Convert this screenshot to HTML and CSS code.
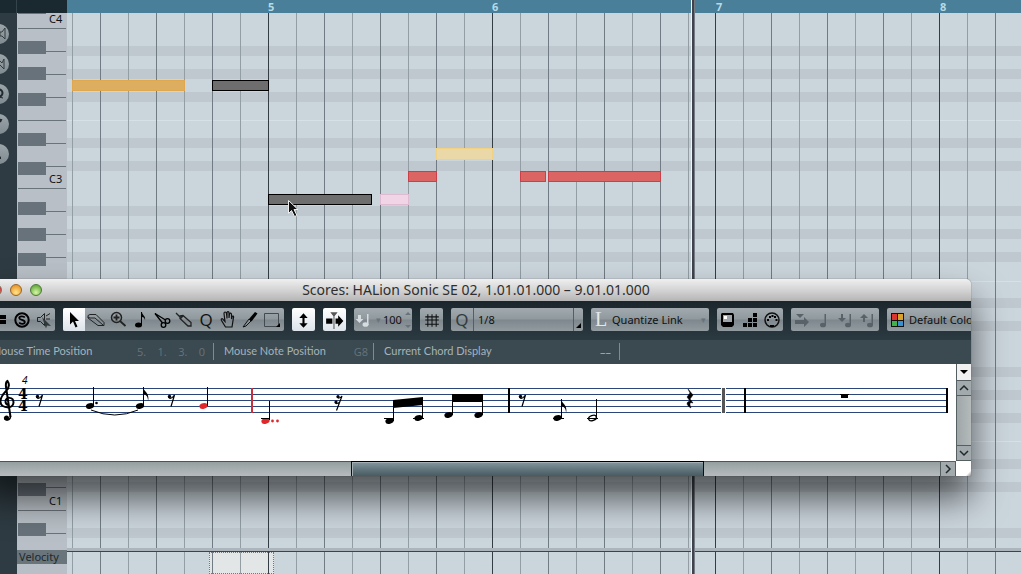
FILE: index.html
```html
<!DOCTYPE html>
<html lang="en">
<head>
<meta charset="utf-8">
<title>Scores: HALion Sonic SE 02</title>
<link rel="stylesheet" href="styles.css">
</head>
<body>
<main class="editor">
  <aside class="inspector">
    <div class="inspector-head"></div>
    <div class="inspector-tools">
      <button class="round" aria-label="Speaker"><svg viewBox="0 0 20 20"><path d="M11 8h2l3-4v11l-3-3h-2z" fill="none" stroke="#333c41"/></svg></button>
      <button class="round" aria-label="Monitor"><svg viewBox="0 0 20 20"><path d="M11 7l2 2 2-4v10l-4-4" fill="none" stroke="#333c41"/></svg></button>
      <button class="round" aria-label="Quantize"><svg viewBox="0 0 20 20"><circle cx="10" cy="9" r="3.5" fill="none" stroke="#222a2e" stroke-width="2"/><path d="M10 13l4 1" stroke="#222a2e"/></svg></button>
      <button class="round" aria-label="Length"><svg viewBox="0 0 20 20"><path d="M8 5l4 1-1 2" stroke="#222a2e" stroke-width="2" fill="none"/></svg></button>
      <button class="round" aria-label="Note expression"><svg viewBox="0 0 20 20"><path d="M9 11l3 2v2H9z" fill="#222a2e"/></svg></button>
    </div>
  </aside>

  <section class="keyboard">
    <div class="keyboard-head"></div>
    <svg class="keys" width="50" height="535" aria-label="Piano keys">
      <path class="key-lines" d="M1 15.5h48M29 38.5h20M29 61.5h20M29 84.5h20M1 107.5h48M29 130.5h20M29 153.5h20M1 175.5h48M29 198.5h20M29 221.5h20M29 244.5h20M29 474.5h20M1 497.5h48M29 520.5h20"/>
      <path class="key-black" d="M1 0h28v1H1zM1 28h28v13H1zM1 54h28v13H1zM1 80h28v13H1zM1 120h28v13H1zM1 149h28v13H1zM1 189h28v13H1zM1 215h28v13H1zM1 240h28v13H1zM1 470h28v13H1zM1 510h28v13H1z"/>
      <text x="32" y="10">C4</text>
      <text x="32" y="170">C3</text>
      <text x="32" y="492">C1</text>
    </svg>
    <div class="lane-name">Velocity</div>
  </section>

  <section class="arrange">
    <div class="ruler"><span class="bar first"></span><span class="bar">5</span><span class="bar">6</span><span class="bar">7</span><span class="bar">8</span></div>
    <div class="roll">
      <svg class="rows" width="100%" height="100%" aria-hidden="true">
        <g class="row-dark">
          <rect y="33" width="100%" height="10"/><rect y="56" width="100%" height="10"/><rect y="79" width="100%" height="10"/>
          <rect y="125" width="100%" height="10"/><rect y="148" width="100%" height="10"/>
          <rect y="193" width="100%" height="10"/><rect y="216" width="100%" height="10"/><rect y="239" width="100%" height="10"/>
          <rect y="285" width="100%" height="10"/><rect y="308" width="100%" height="10"/>
          <rect y="354" width="100%" height="10"/><rect y="377" width="100%" height="10"/><rect y="400" width="100%" height="10"/>
          <rect y="446" width="100%" height="10"/><rect y="469" width="100%" height="10"/><rect y="515" width="100%" height="10"/>
        </g>
        <g class="row-light"><rect y="107" width="100%" height="1"/><rect y="268" width="100%" height="1"/><rect y="428" width="100%" height="1"/></g>
      </svg>
      <div class="note n1"></div>
      <div class="note n2 selected"></div>
      <div class="note n3 selected"></div>
      <div class="note n4"></div>
      <div class="note n5 red"></div>
      <div class="note n6"></div>
      <div class="note n7 red"></div>
      <div class="note n8 red"></div>
    </div>
    <div class="divider"></div>
    <div class="lane"><div class="lane-selection"></div></div>
    <svg class="beats" aria-hidden="true">
      <path class="eighth" d="M5.500 0v900M61.500 0v900M117.500 0v900M173.500 0v900M229.500 0v900M285.500 0v900M341.500 0v900M397.500 0v900M453.500 0v900M509.500 0v900M565.500 0v900M621.500 0v900M676.500 0v900M732.500 0v900M788.500 0v900M844.500 0v900M900.500 0v900"/>
      <path class="quarter" d="M33.500 0v900M89.500 0v900M145.500 0v900M257.500 0v900M313.500 0v900M369.500 0v900M481.500 0v900M537.500 0v900M593.500 0v900M704.500 0v900M760.500 0v900M816.500 0v900M928.500 0v900"/>
      <path class="whole" d="M201.500 0v900M425.500 0v900M648.500 0v900M872.500 0v900"/>
    </svg>
    <div class="playhead"></div>
    <svg class="cursor" width="14" height="19" viewBox="0 0 14 19" aria-hidden="true"><path d="M1.500 1.500v13l3-3 3 6 2.500-1-3-6h4z" fill="#111" stroke="#eee"/></svg>
  </section>
</main>

<section class="window" aria-label="Score editor">
  <header class="titlebar">
    <button class="light close" aria-label="Close"></button>
    <button class="light minimise" aria-label="Minimise"></button>
    <button class="light expand" aria-label="Zoom"></button>
    <h1>Scores: HALion Sonic SE 02, 1.01.01.000 – 9.01.01.000</h1>
  </header>

  <div class="toolbar">
    <div class="group">
      <button class="tool" aria-label="Setup"><svg viewBox="0 0 22 23"><path d="M7 7h10v4H7zM7 12h10v4H7z"/></svg></button>
      <button class="tool" aria-label="Solo editor"><svg viewBox="0 0 22 23"><circle cx="11" cy="12" r="6.700" fill="none" stroke="#000" stroke-width="2"/><path d="M13.800 9.500c-1-1.700-5.600-1.700-5.600.500s5.600 1.500 5.600 4-4.600 2.300-5.600.500" fill="none" stroke="#000" stroke-width="1.800"/></svg></button>
      <button class="tool" aria-label="Acoustic feedback"><svg viewBox="0 0 22 23"><path d="M4.500 9.500h3l4-4v12l-4-4h-3zM13 8l4-2.500M13 11h4" fill="none" stroke="#222"/><path d="M9 9l9 9-4-.500-1 3z" fill="#30383c"/></svg></button>
    </div>
    <div class="group tools">
      <button class="tool on" aria-label="Object selection"><svg viewBox="0 0 22 23"><path d="M7 4v12.500l3-3 2.500 6 2-1-2.500-5.500h4z"/></svg></button>
      <button class="tool" aria-label="Erase"><svg viewBox="0 0 22 23"><path d="M3 7.500l2-1h6l8 8v3h-6l-10-7.500zM3 9l2 1h5l8 7" fill="none" stroke="#222"/></svg></button>
      <button class="tool" aria-label="Zoom"><svg viewBox="0 0 22 23"><circle cx="9.500" cy="9.500" r="5" fill="none" stroke="#222" stroke-width="1.500"/><path d="M6.500 9.500h6M9.500 6.500v6M13 13l5.500 5" fill="none" stroke="#222" stroke-width="1.800"/></svg></button>
      <button class="tool" aria-label="Insert note"><svg viewBox="0 0 22 23"><ellipse cx="9.500" cy="17" rx="3.500" ry="2.500"/><path d="M12 17V4h1c0 3 4 4 3 8-.500-2-1.500-3-3-3v8z"/></svg></button>
      <button class="tool" aria-label="Split"><svg viewBox="0 0 22 23"><g fill="none" stroke="#000" stroke-width="1.300"><circle cx="16.500" cy="13" r="2.300"/><circle cx="12.500" cy="17" r="2.300"/><path d="M4 5.500l10.500 6.500M4 5.500l7.500 9.500"/></g></svg></button>
      <button class="tool" aria-label="Glue"><svg viewBox="0 0 22 23"><path d="M3 5l4 4M7 8l3-.500 8 7v3.500h-3l-8-7.500zM7 11l3-3" fill="none" stroke="#222" stroke-width="1.300"/></svg></button>
      <button class="tool letter" aria-label="Quantize">Q</button>
      <button class="tool" aria-label="Layout"><svg viewBox="0 0 22 23"><path d="M8.500 19l-4-6.500c-1-2 1-2.500 2-.500l1.500 1.500-1-8c0-2 2-2 2.500 0l.500 5V5c0-2 2-1.500 2 0v5l.500-4c.500-1.500 2-1 2 .500V11l.500-2c.500-1.500 2-1 1.500.500l-1.500 9.500z" fill="none" stroke="#111" stroke-width="1.200"/></svg></button>
      <button class="tool" aria-label="Cut flag"><svg viewBox="0 0 22 23"><path d="M4 19l6-8 2 2-5 5z" fill="#899298" stroke="#111"/><path d="M10 11l6-7 2.500 1.500-6 8z"/></svg></button>
      <button class="tool" aria-label="Range"><svg viewBox="0 0 22 23"><path d="M3.500 5.500h14v13h-14z" fill="none" stroke="#444b50"/><path d="M19 15v4h-4z"/></svg></button>
    </div>
    <div class="group"><button class="tool wide on" aria-label="Vertical"><svg viewBox="0 0 22 23"><path d="M11 5l4 4.500h-3v5h3L11 19l-4-4.500h3v-5H7z"/></svg></button></div>
    <div class="group"><button class="tool wide on" aria-label="Auto scroll"><svg viewBox="0 0 22 23"><path d="M3 10h6v5H3zM12 10h2.500V7l5 5.500-5 5.500v-3H12z"/><path d="M7 4h7l-3 4v12h-1V8z" fill="#555"/></svg></button></div>
    <div class="group velocity">
      <svg class="icon" viewBox="0 0 22 23" aria-hidden="true"><path d="M4 7h3v4h2.500l-4 4-4-4H4zM13 6h1.500v11H13z" fill="#d6dcdf"/><ellipse cx="11.500" cy="16.500" rx="3" ry="2.300" fill="#d6dcdf"/></svg>
      <span class="down">▾</span>
      <input class="amount" aria-label="Insert velocity" value="100">
      <svg class="spin" viewBox="0 0 8 20" aria-hidden="true"><path d="M1 5l3-3 3 3zM1 15l3 3 3-3z" fill="#697278"/></svg>
    </div>
    <div class="group"><button class="tool wide" aria-label="Snap"><svg viewBox="0 0 22 23"><path d="M7.500 6v12M11.500 6v12M15.500 6v12M5 8.500h13M5 11.500h13M5 15.500h13" fill="none" stroke="#111"/></svg></button></div>
    <div class="group quantize">
      <label class="q-label" for="quantize">Q</label>
      <select id="quantize"><option>1/8</option></select>
      <svg class="corner" viewBox="0 0 10 23" aria-hidden="true"><path d="M.500 0v23" stroke="#555e64"/><path d="M8 15v5H3z"/></svg>
    </div>
    <div class="group link">
      <label class="l-label" for="link">L</label>
      <select id="link"><option>Quantize Link</option></select>
      <span class="down">▾</span>
    </div>
    <div class="group">
      <button class="tool" aria-label="Step input"><svg viewBox="0 0 22 23"><path d="M5 5h11l1 2v10l-2 2H6l-2-2V6z"/><path d="M6 7h9v7H6z" fill="#9da5aa"/><path d="M7 8h3v3H7z" fill="#fff"/></svg></button>
      <button class="tool" aria-label="MIDI input"><svg viewBox="0 0 22 23"><path d="M4 15h4v4H4zM9 15h4v4H9zM14 15h4v4h-4zM9 10h4v4H9zM14 10h4v4h-4zM14 5h4v4h-4z"/></svg></button>
      <button class="tool" aria-label="MIDI connector"><svg viewBox="0 0 22 23"><circle cx="11" cy="12" r="7" fill="none" stroke="#111" stroke-width="1.500"/><path d="M6 11h2v2H6zM8 8h2v2H8zM10.500 7h2v2h-2zM13 8h2v2h-2zM14.500 11h2v2h-2zM9 17h4v2H9z"/></svg></button>
    </div>
    <div class="group dim">
      <button class="tool" aria-label="Move insert"><svg viewBox="0 0 22 23"><path d="M5 6h8l-4 4zM4 12h9V9l5 5-5 5v-3H4z"/></svg></button>
      <button class="tool" aria-label="Pitch"><svg viewBox="0 0 22 23"><ellipse cx="10" cy="17" rx="3" ry="2.300"/><path d="M11.500 6H13v11h-1.500z"/></svg></button>
      <button class="tool" aria-label="Note on"><svg viewBox="0 0 22 23"><ellipse cx="13" cy="17" rx="3" ry="2.300"/><path d="M14.500 6H16v11h-1.500zM6 6h2v4h3l-4 4-4-4h3z"/></svg></button>
      <button class="tool" aria-label="Note off"><svg viewBox="0 0 22 23"><ellipse cx="13" cy="17" rx="3" ry="2.300"/><path d="M14.500 6H16v11h-1.500zM6 14h2v-4h3L7 6l-4 4h3z"/></svg></button>
    </div>
    <div class="group colours">
      <svg class="icon" viewBox="0 0 22 23" aria-hidden="true"><path d="M4 5h13v14H4z" fill="#111"/><path d="M5 6h5v6H5z" fill="#d9362f"/><path d="M11 6h5v6h-5z" fill="#d8a12b"/><path d="M5 13h5v5H5z" fill="#42b14c"/><path d="M11 13h5v5h-5z" fill="#3a8fd0"/></svg>
      <span>Default Colors</span>
    </div>
  </div>

  <div class="info">
    <div class="cell time"><span>Mouse Time Position</span><span class="value position"><span>5.</span><span>1.</span><span>3.</span><span>0</span></span></div>
    <div class="cell pitch"><span>Mouse Note Position</span><span class="value">G8</span></div>
    <div class="cell chord"><span>Current Chord Display</span><span class="value bright">––</span></div>
  </div>

  <div class="score">
    <svg class="sheet" viewBox="-19 364 975 97" aria-label="Staff">
      <path d="M-19 388.500H721M-19 394.500H721M-19 400.500H721M-19 406.500H721M-19 412.500H721M726 388.500H947M726 394.500H947M726 400.500H947M726 406.500H947M726 412.500H947" stroke="#2b4678" fill="none"/>
      <path d="M251 388h2v25h-2z" fill="#c8313b"/>
      <path d="M508 388h2v25h-2zM744 388h2v25h-2zM946 388h2v25h-2z"/>
      <path d="M722 388h3v25h-3z" fill="#555"/>
      <g fill="none" stroke="#000"><path d="M10.500 417L6 387c-.500-4 .500-5.500 1.500-6 2 3 1.500 7-1.500 10s-6 7-5.500 11.500c1 6 13 7 13 0 0-6-8-6-8-1 0 2 1 3 2.500 3.500" stroke-width="2"/><path d="M10.500 416c0 5-6 5-6 1.500" stroke-width="1.500"/></g>
      <circle cx="6.500" cy="418" r="2.500"/>
      <text class="above" x="22" y="384">4</text>
      <text class="meter" x="18" y="399">4</text><text class="meter" x="18" y="411">4</text>
      <path fill="none" stroke="#000" stroke-width="1.200" d="M36.500 397c1 2 3 2 6-2l-3.500 11.500M168.500 397c1 2 3 2 6-2l-3.500 11.500M519.500 397c1 2 3 2 6-2l-3.500 11.500M337 397c1 1.500 3 1.500 5-1l-5.500 14.500M335 402.500c1 1.500 3 1.500 5-1"/>
      <g><circle cx="37.500" cy="396.500" r="1.700"/><circle cx="169.500" cy="396.500" r="1.700"/><circle cx="520.500" cy="396.500" r="1.700"/><circle cx="338" cy="396.500" r="1.600"/><circle cx="336" cy="402" r="1.600"/></g>
      <path d="M688 389l5 6-3 4 3 4c-3-1-4 0-2 5-5-3-5-6-1-7l-3-4 3-4z" stroke="#000" stroke-width=".500"/>
      <g>
        <ellipse cx="90" cy="406" rx="4.200" ry="2.800" transform="rotate(-14 90 406)"/>
        <ellipse cx="140" cy="406" rx="4.200" ry="2.800" transform="rotate(-14 140 406)"/>
        <ellipse cx="389.500" cy="421" rx="4.200" ry="2.800" transform="rotate(-14 389.500 421)"/>
        <ellipse cx="418.500" cy="418" rx="4.200" ry="2.800" transform="rotate(-14 418.500 418)"/>
        <ellipse cx="448.500" cy="415" rx="4.200" ry="2.800" transform="rotate(-14 448.500 415)"/>
        <ellipse cx="478.500" cy="415" rx="4.200" ry="2.800" transform="rotate(-14 478.500 415)"/>
        <ellipse cx="557.500" cy="418" rx="4.200" ry="2.800" transform="rotate(-14 557.500 418)"/>
        <circle cx="96.500" cy="403" r="1.300"/>
      </g>
      <g fill="#e0272b"><ellipse cx="203.500" cy="406" rx="4.200" ry="2.800" transform="rotate(-14 203.500 406)"/><ellipse cx="265.500" cy="421" rx="4.200" ry="2.800" transform="rotate(-14 265.500 421)"/><circle cx="272.500" cy="421" r="1.400"/><circle cx="277.500" cy="421" r="1.400"/></g>
      <ellipse cx="592.500" cy="418" rx="4" ry="2.500" transform="rotate(-20 592.500 418)" fill="#fff" stroke="#000" stroke-width="1.400"/>
      <path d="M93.500 387v19M143.500 387v19M207.500 387v19M269.500 401v19M393.500 402v19M422.500 399v19M452.500 396v19M482.500 396v19M561.500 399v19M596.500 399v19M261 418.500h9M384 418.500h9M413 418.500h11M553 418.500h11M587 418.500h11" stroke="#000" fill="none"/>
      <path d="M143 387c1 5 7 6 5 14 0-5-2-6-5-7zM561 399c1 5 7 6 5 14 0-5-2-6-5-7zM393 400l30-3v8l-30 3zM452 394h31v8h-31z"/>
      <path d="M91 410q24 10 47 0" fill="none" stroke="#000"/>
      <path d="M840 394h9v1h-1v3h-7v-3h-1z"/>
    </svg>
    <div class="vscroll">
      <button class="menu" aria-label="Track menu"><svg viewBox="0 0 14 14"><path d="M3 5h8l-4 4z"/></svg></button>
      <button class="arrow" aria-label="Scroll up"><svg viewBox="0 0 14 14"><path d="M3 9l4-4 4 4"/></svg></button>
      <div class="vtrack"></div>
      <button class="arrow" aria-label="Scroll down"><svg viewBox="0 0 14 14"><path d="M3 5l4 4 4-4"/></svg></button>
    </div>
  </div>
  <div class="hscroll">
    <div class="htrack"><div class="thumb"></div></div>
    <button class="arrow right" aria-label="Scroll right"><svg viewBox="0 0 14 14"><path d="M5 3l4 4-4 4"/></svg></button>
    <div class="grip"></div>
  </div>
</section>
</body>
</html>
```
FILE: styles.css
```css
* { box-sizing: border-box; }

body {
  margin: 0;
  height: 100vh;
  overflow: hidden;
  position: relative;
  font-family: "Noto Sans", "Open Sans", sans-serif;
  font-size: 11px;
  color: #111;
  background: #cad4dc;
}

button, input, select {
  margin: 0;
  padding: 0;
  border: 0;
  background: none;
  font: inherit;
  color: inherit;
  appearance: none;
}

svg { display: block; }

.editor {
  display: grid;
  grid-template-columns: 17px 50px 1fr;
  height: 100%;
}

.inspector, .keyboard, .arrange { min-width: 0; min-height: 0; overflow: hidden; }
.inspector { background: #2e3b42; }
.inspector-head, .keyboard-head { height: 13px; background: #1a2930; }
.inspector-head { border-right: 1px solid #35444b; }
.inspector-tools { display: flex; flex-direction: column; gap: 10px; padding-top: 11px; }

.round {
  width: 20px;
  height: 20px;
  margin-left: -11px;
  border-radius: 50%;
  background: linear-gradient(#9ba5aa, #808b91);
}

.keyboard {
  display: grid;
  grid-template-rows: 13px minmax(0, 1fr) 24px;
  background: #b8bfc6;
}
.keys { overflow: visible; }
.key-lines { stroke: #69737a; fill: none; }
.key-black { fill: #68727a; }
.keys text { font-size: 11px; fill: #111; }
.lane-name {
  position: relative;
  height: 14px;
  padding-left: 2px;
  line-height: 14px;
  color: #20282c;
  background: #69757b;
}

.arrange {
  position: relative;
  display: grid;
  grid-template-rows: 13px minmax(0, 1fr) 4px 22px;
}
.ruler {
  display: flex;
  overflow: hidden;
  background: #4a7f99;
  color: #b5dbe8;
  font-weight: 700;
  line-height: 14px;
}
.bar { flex: 0 0 224px; }
.bar.first { flex-basis: 201px; }
.roll { position: relative; background: #cbd5dc; }
.row-dark { fill: #bfc8cf; }
.row-light { fill: #d7e0e6; }
.beats {
  position: absolute;
  top: 13px;
  left: 0;
  width: 100%;
  height: calc(100% - 13px);
}
.eighth { stroke: #929da4; }
.quarter { stroke: #707b83; }
.whole { stroke: #343d45; }

.note { position: absolute; z-index: 1; height: 11px; }
.note.selected { background: #6f6e6f; border: 1px solid #000; }
.note.red { background: #db6562; border: 1px solid #cb3f49; }
.n1 { left: 5px; top: 67px; width: 113px; background: #deae60; border: 1px solid #e0a84e; }
.n2 { left: 145px; top: 67px; width: 57px; }
.n3 { left: 201px; top: 181px; width: 104px; }
.n4 { left: 313px; top: 181px; width: 29px; background: #f1d5e7; border: 1px solid #dfbbd1; }
.n5 { left: 341px; top: 158px; width: 29px; }
.n6 { left: 369px; top: 135px; width: 57px; height: 12px; background: #ead8a9; border: 1px solid #f0d282; }
.n7 { left: 453px; top: 158px; width: 26px; }
.n8 { left: 481px; top: 158px; width: 113px; }

.divider {
  position: relative;
  z-index: 1;
  background: #abb5bb;
  border-bottom: 1px solid #3a444a;
}
.lane {
  background: #cbd5dc;
  padding-left: 142px;
}
.lane-selection {
  width: 65px;
  height: 100%;
  border: 1px dotted #777;
  background: #e3e6e7;
}
.playhead {
  position: absolute;
  z-index: 1;
  top: 0;
  bottom: 0;
  left: 624px;
  width: 4px;
  background: #40434d;
  border-left: 1px solid #eef4f6;
  border-right: 1px solid #747b83;
}
.cursor { position: absolute; z-index: 2; left: 220px; top: 199px; }

.window {
  position: absolute;
  z-index: 3;
  left: -19px;
  right: 50px;
  top: 279px;
  border-radius: 5px 5px 0 0;
  box-shadow: 0 0 1px #333, 0 22px 36px rgba(0, 0, 0, .62);
}
.titlebar {
  display: flex;
  align-items: center;
  gap: 8px;
  height: 22px;
  padding: 0 9px;
  border-radius: 5px 5px 0 0;
  background: linear-gradient(#efefef, #d4d4d4 50%, #b5b5b5);
}
.titlebar h1 {
  flex: 1;
  margin: 0;
  padding-right: 60px;
  text-align: center;
  font-size: 14px;
  line-height: 22px;
  font-weight: 400;
  color: #2e2e2e;
}
.light { width: 12px; height: 12px; border-radius: 50%; border: 1px solid #775; }
.close { background: radial-gradient(circle at 50% 80%, #ff9a8a, #d3373b 70%); }
.minimise { background: radial-gradient(circle at 50% 75%, #ffe58a, #e99a2e 75%); border-color: #9a6328; }
.expand { background: radial-gradient(circle at 50% 75%, #d5f7a5, #6cae43 75%); border-color: #4d7939; }

.toolbar {
  display: flex;
  gap: 8px;
  height: 39px;
  padding: 7px 0 9px 8px;
  overflow: hidden;
  background: linear-gradient(#1b272d, #2b3940);
}
.group {
  display: flex;
  align-items: center;
  flex: none;
  height: 23px;
  overflow: hidden;
  border-radius: 2px;
  background: linear-gradient(#a2aaaf, #90999e 48%, #7d878d 52%, #929b9f);
}
.tool { width: 22px; height: 23px; flex: none; }
.tool.wide { width: 23px; }
.tool.on { background: linear-gradient(#fff, #eef1f5 50%, #dce3ea); }
.tools { width: 221px; }
.tool.letter { font-family: "Open Sans", sans-serif; font-size: 17px; line-height: 22px; }
.down { color: #6b747a; font-size: 9px; }
.icon { width: 22px; height: 23px; flex: none; }
.velocity { width: 58px; }
.velocity .down { width: 7px; }
.amount { width: 21px; }
.velocity .spin { width: 8px; height: 20px; }
.quantize { width: 132px; }
.q-label {
  width: 23px;
  text-align: center;
  font-size: 17px;
  line-height: 23px;
  color: #333b40;
  border-right: 1px solid #555e64;
}
.quantize select { flex: 1; padding-left: 4px; }
.corner { width: 10px; height: 23px; }
.link { width: 118px; padding: 0 3px 0 4px; }
.l-label { width: 17px; font-family: "Liberation Serif", serif; font-size: 20px; line-height: 23px; color: #e3e8ea; }
.link select { flex: 1; }
.dim { fill: #596269; }
.colours { flex: 1 0 84px; white-space: nowrap; border-radius: 2px 0 0 2px; }

.info {
  display: flex;
  height: 24px;
  background: #3b4950;
  color: #a5b3bb;
  font-family: Lato, sans-serif;
  line-height: 22px;
}
.cell {
  display: flex;
  justify-content: space-between;
  padding: 0 9px 0 10px;
  background: linear-gradient(#7d8b92, #7d8b92) right 3px / 1px 17px no-repeat;
}
.cell.time { width: 233px; }
.cell.pitch { width: 160px; padding-right: 6px; }
.cell.chord { width: 246px; }
.value { color: #66747b; font-family: "Open Sans", sans-serif; line-height: 23px; }
.position { display: flex; justify-content: space-between; width: 68px; }
.value.bright { color: #a5b3bb; }

.score { display: flex; height: 97px; background: #fff; }
.sheet { flex: none; width: 975px; height: 97px; }
.above { font: italic 10px "Open Sans", sans-serif; }
.meter { font: 700 14px "DejaVu Serif", serif; }

.vscroll {
  display: flex;
  flex-direction: column;
  width: 15px;
  margin-left: auto;
  border-left: 1px solid #555e60;
  background: #a9b0b1;
}
.vscroll button { flex: none; width: 14px; }
.menu { height: 16px; background: #f1f1f1; }
.arrow { height: 16px; border-top: 1px solid #555e60; border-bottom: 1px solid #555e60; background: #a2aaad; }
.arrow svg { fill: none; stroke: #20282c; stroke-width: 1.5; }
.vtrack { flex: 1; background: linear-gradient(90deg, #a0a7a8, #b4baba); }

.hscroll { display: flex; height: 15px; background: #fff; }
.htrack {
  flex: 1;
  padding-left: 370px;
  border-top: 1px solid #4c5556;
  background: linear-gradient(#969fa0, #b6bcbc);
}
.thumb {
  width: 353px;
  height: 14px;
  border: solid #0b1013;
  border-width: 0 1px;
  background: linear-gradient(#85969e, #64777f 50%, #485a62);
  box-shadow: 0 -1px #000, inset 1px 1px #a4b0b4;
}
.arrow.right { width: 16px; height: 15px; border: 1px solid #555e60; border-bottom: 0; }
.grip { width: 15px; background: linear-gradient(135deg, #fff 80%, #888); }
```
